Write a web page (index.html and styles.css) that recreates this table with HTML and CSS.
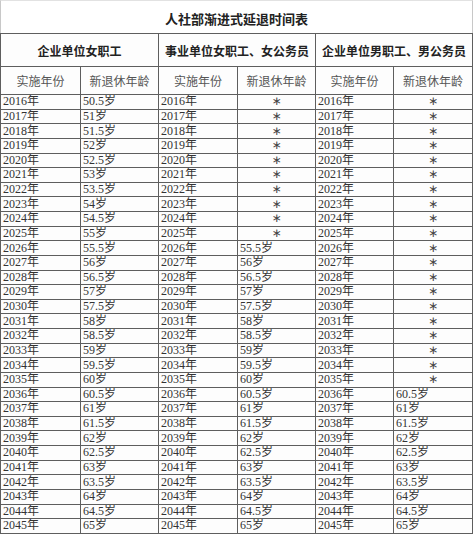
FILE: index.html
```html
<!DOCTYPE html>
<html lang="zh-CN">
<head>
<meta charset="utf-8">
<title>人社部渐进式延退时间表</title>
<link rel="stylesheet" href="styles.css">
</head>
<body>
<div class="sheet">
  <div class="title">人社部渐进式延退时间表</div>
  <div class="grid">
    <div class="h1">企业单位女职工</div>
    <div class="h1">事业单位女职工、女公务员</div>
    <div class="h1">企业单位男职工、男公务员</div>
    <div class="h2">实施年份</div><div class="h2">新退休年龄</div>
    <div class="h2">实施年份</div><div class="h2">新退休年龄</div>
    <div class="h2">实施年份</div><div class="h2">新退休年龄</div>

    <div class="c">2016年</div><div class="c">50.5岁</div><div class="c">2016年</div><div class="c s">∗</div><div class="c">2016年</div><div class="c s">∗</div>
    <div class="c">2017年</div><div class="c">51岁</div><div class="c">2017年</div><div class="c s">∗</div><div class="c">2017年</div><div class="c s">∗</div>
    <div class="c">2018年</div><div class="c">51.5岁</div><div class="c">2018年</div><div class="c s">∗</div><div class="c">2018年</div><div class="c s">∗</div>
    <div class="c">2019年</div><div class="c">52岁</div><div class="c">2019年</div><div class="c s">∗</div><div class="c">2019年</div><div class="c s">∗</div>
    <div class="c">2020年</div><div class="c">52.5岁</div><div class="c">2020年</div><div class="c s">∗</div><div class="c">2020年</div><div class="c s">∗</div>
    <div class="c">2021年</div><div class="c">53岁</div><div class="c">2021年</div><div class="c s">∗</div><div class="c">2021年</div><div class="c s">∗</div>
    <div class="c">2022年</div><div class="c">53.5岁</div><div class="c">2022年</div><div class="c s">∗</div><div class="c">2022年</div><div class="c s">∗</div>
    <div class="c">2023年</div><div class="c">54岁</div><div class="c">2023年</div><div class="c s">∗</div><div class="c">2023年</div><div class="c s">∗</div>
    <div class="c">2024年</div><div class="c">54.5岁</div><div class="c">2024年</div><div class="c s">∗</div><div class="c">2024年</div><div class="c s">∗</div>
    <div class="c">2025年</div><div class="c">55岁</div><div class="c">2025年</div><div class="c s">∗</div><div class="c">2025年</div><div class="c s">∗</div>
    <div class="c">2026年</div><div class="c">55.5岁</div><div class="c">2026年</div><div class="c">55.5岁</div><div class="c">2026年</div><div class="c s">∗</div>
    <div class="c">2027年</div><div class="c">56岁</div><div class="c">2027年</div><div class="c">56岁</div><div class="c">2027年</div><div class="c s">∗</div>
    <div class="c">2028年</div><div class="c">56.5岁</div><div class="c">2028年</div><div class="c">56.5岁</div><div class="c">2028年</div><div class="c s">∗</div>
    <div class="c">2029年</div><div class="c">57岁</div><div class="c">2029年</div><div class="c">57岁</div><div class="c">2029年</div><div class="c s">∗</div>
    <div class="c">2030年</div><div class="c">57.5岁</div><div class="c">2030年</div><div class="c">57.5岁</div><div class="c">2030年</div><div class="c s">∗</div>
    <div class="c">2031年</div><div class="c">58岁</div><div class="c">2031年</div><div class="c">58岁</div><div class="c">2031年</div><div class="c s">∗</div>
    <div class="c">2032年</div><div class="c">58.5岁</div><div class="c">2032年</div><div class="c">58.5岁</div><div class="c">2032年</div><div class="c s">∗</div>
    <div class="c">2033年</div><div class="c">59岁</div><div class="c">2033年</div><div class="c">59岁</div><div class="c">2033年</div><div class="c s">∗</div>
    <div class="c">2034年</div><div class="c">59.5岁</div><div class="c">2034年</div><div class="c">59.5岁</div><div class="c">2034年</div><div class="c s">∗</div>
    <div class="c">2035年</div><div class="c">60岁</div><div class="c">2035年</div><div class="c">60岁</div><div class="c">2035年</div><div class="c s">∗</div>
    <div class="c">2036年</div><div class="c">60.5岁</div><div class="c">2036年</div><div class="c">60.5岁</div><div class="c">2036年</div><div class="c">60.5岁</div>
    <div class="c">2037年</div><div class="c">61岁</div><div class="c">2037年</div><div class="c">61岁</div><div class="c">2037年</div><div class="c">61岁</div>
    <div class="c">2038年</div><div class="c">61.5岁</div><div class="c">2038年</div><div class="c">61.5岁</div><div class="c">2038年</div><div class="c">61.5岁</div>
    <div class="c">2039年</div><div class="c">62岁</div><div class="c">2039年</div><div class="c">62岁</div><div class="c">2039年</div><div class="c">62岁</div>
    <div class="c">2040年</div><div class="c">62.5岁</div><div class="c">2040年</div><div class="c">62.5岁</div><div class="c">2040年</div><div class="c">62.5岁</div>
    <div class="c">2041年</div><div class="c">63岁</div><div class="c">2041年</div><div class="c">63岁</div><div class="c">2041年</div><div class="c">63岁</div>
    <div class="c">2042年</div><div class="c">63.5岁</div><div class="c">2042年</div><div class="c">63.5岁</div><div class="c">2042年</div><div class="c">63.5岁</div>
    <div class="c">2043年</div><div class="c">64岁</div><div class="c">2043年</div><div class="c">64岁</div><div class="c">2043年</div><div class="c">64岁</div>
    <div class="c">2044年</div><div class="c">64.5岁</div><div class="c">2044年</div><div class="c">64.5岁</div><div class="c">2044年</div><div class="c">64.5岁</div>
    <div class="c">2045年</div><div class="c">65岁</div><div class="c">2045年</div><div class="c">65岁</div><div class="c">2045年</div><div class="c">65岁</div>
  </div>
</div>
</body>
</html>
```
FILE: styles.css
```css
html, body {
  margin: 0;
  padding: 0;
  background: #ffffff;
}

.sheet {
  width: 473px;
  font-family: "Liberation Serif", "Noto Sans CJK SC", serif;
}

.title {
  height: 33px;
  box-sizing: border-box;
  border-top: 1px solid #e2e2e2;
  border-left: 1px solid #c8c8c8;
  border-right: 1px solid #c8c8c8;
  display: flex;
  align-items: center;
  justify-content: center;
  font-family: "Noto Sans CJK SC", sans-serif;
  font-weight: 700;
  font-size: 13px;
  color: #222;
  padding-top: 2px;
}

.grid {
  display: grid;
  grid-template-columns: 79px 77px 78px 77px 77px 78px;
  grid-template-rows: 32px 27px;
  grid-auto-rows: 13.63px;
  gap: 1px;
  padding: 1px;
  background: #5e5e5e;
}

.grid > div {
  background: #fdfdfd;
  display: flex;
  align-items: center;
  overflow: hidden;
  white-space: nowrap;
}

.h1 {
  grid-column: span 2;
  justify-content: center;
  font-family: "Noto Sans CJK SC", sans-serif;
  font-weight: 700;
  font-size: 12px;
  color: #222;
}

.h2 {
  justify-content: center;
  font-family: "Noto Sans CJK SC", sans-serif;
  font-size: 12px;
  color: #555;
}

.c {
  padding-left: 2px;
  font-size: 12px;
  line-height: 13px;
  color: #333;
}

.s {
  justify-content: center;
  padding-left: 0;
  font-family: "DejaVu Sans", sans-serif;
  font-size: 12px;
  color: #444;
}
```
